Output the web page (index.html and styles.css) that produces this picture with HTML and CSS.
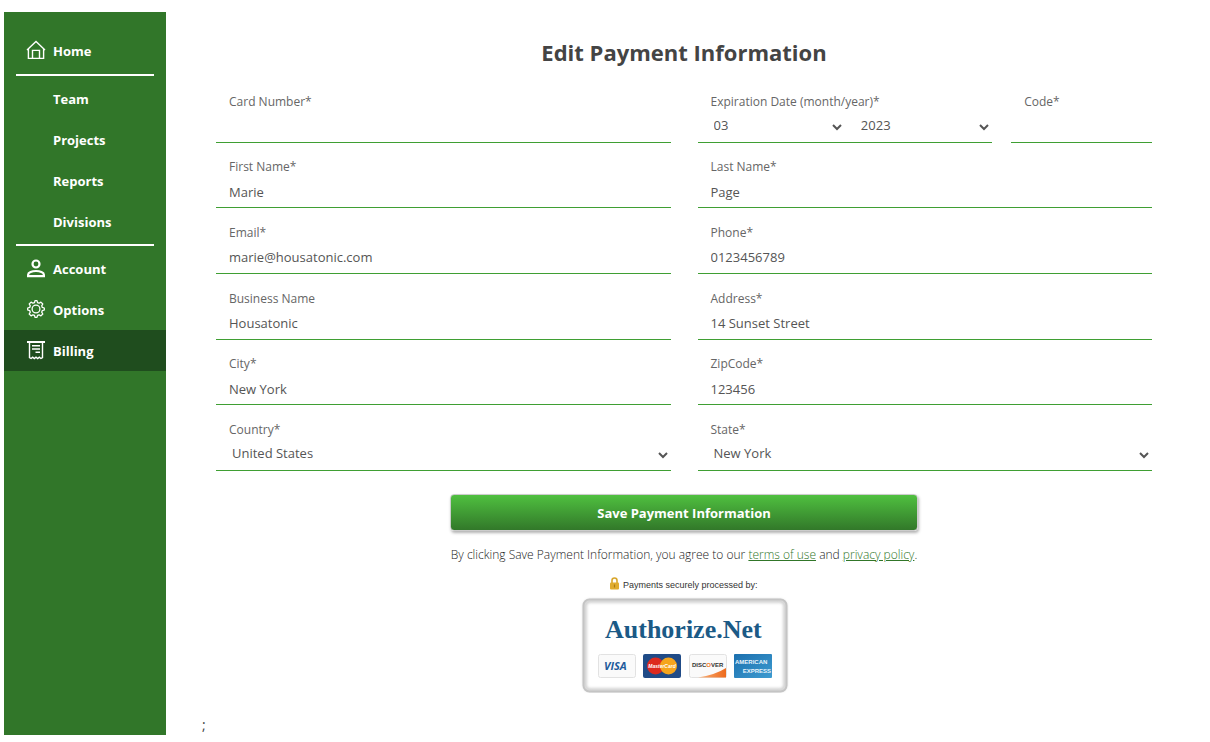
FILE: index.html
```html
<!DOCTYPE html>
<html lang="en">
<head>
<meta charset="utf-8">
<title>Edit Payment Information</title>
<link rel="stylesheet" href="styles.css">
</head>
<body>
<div class="layout">
  <nav class="sidebar">
    <a class="nav-item" href="#">
      <svg class="nav-icon" viewBox="0 0 20 20" fill="none" stroke="#fff" stroke-width="1.4"><path d="M1 10 10 1.400 19 10M2.400 9v9.400h15.200V9M6.500 18.400v-8h7v8"/></svg>
      Home</a>
    <hr class="nav-divider">
    <a class="nav-item" href="#">Team</a>
    <a class="nav-item" href="#">Projects</a>
    <a class="nav-item" href="#">Reports</a>
    <a class="nav-item" href="#">Divisions</a>
    <hr class="nav-divider">
    <a class="nav-item" href="#">
      <svg class="nav-icon" viewBox="0 0 20 20" fill="none" stroke="#fff" stroke-width="2.200"><circle cx="10" cy="6" r="3.500"/><path d="M2.100 18.200v-1.500C2.100 14.400 6 13 10 13s7.900 1.400 7.900 3.700v1.500z"/></svg>
      Account</a>
    <a class="nav-item" href="#">
      <svg class="nav-icon" viewBox="0 0 20 20" fill="none" stroke="#fff" stroke-width="1.3" stroke-linejoin="round"><circle cx="10" cy="10" r="3.900"/><path d="M9 1.600h2l.5 2 1.600.6 1.800-1.100 1.900 1.900-1.100 1.800.6 1.600 2 .6v2l-2 .6-.6 1.600 1.100 1.800-1.900 1.900-1.800-1.100-1.600.6-.5 2H9l-.5-2-1.600-.6-1.800 1.100L3.200 15l1.100-1.800-.6-1.600-2-.6V9l2-.6.6-1.600L3.200 5l1.900-1.900 1.800 1.100 1.600-.6z"/></svg>
      Options</a>
    <a class="nav-item nav-item-active" href="#">
      <svg class="nav-icon" viewBox="0 0 20 20" fill="none" stroke="#fff"><path stroke-width="2" d="M1 2h18"/><path stroke-width="1.400" d="M3.500 2v15.500l1.600 1 1.600-1.300 1.600 1.300L10 17.200l1.700 1.300 1.600-1.300 1.600 1.300 1.600-1V2"/><path stroke-width="1.400" d="M6 5.800h8M6 9h8M9.500 12.200H14"/></svg>
      Billing</a>
  </nav>

  <main class="content">
    <h1 class="title">Edit Payment Information</h1>
    <form class="payment">
      <div class="fields">
        <div class="field">
          <label for="card">Card Number*</label>
          <input id="card" type="text">
        </div>
        <div class="card-extra">
          <div class="field">
            <label for="month">Expiration Date (month/year)*</label>
            <div class="select-pair">
              <select id="month"><option>03</option></select>
              <select id="year" aria-label="Expiration year"><option>2023</option></select>
            </div>
          </div>
          <div class="field">
            <label for="code">Code*</label>
            <input id="code" type="text">
          </div>
        </div>
        <div class="field">
          <label for="first">First Name*</label>
          <input id="first" type="text" value="Marie">
        </div>
        <div class="field">
          <label for="last">Last Name*</label>
          <input id="last" type="text" value="Page">
        </div>
        <div class="field">
          <label for="email">Email*</label>
          <input id="email" type="email" value="marie@housatonic.com">
        </div>
        <div class="field">
          <label for="phone">Phone*</label>
          <input id="phone" type="tel" value="0123456789">
        </div>
        <div class="field">
          <label for="business">Business Name</label>
          <input id="business" type="text" value="Housatonic">
        </div>
        <div class="field">
          <label for="address">Address*</label>
          <input id="address" type="text" value="14 Sunset Street">
        </div>
        <div class="field">
          <label for="city">City*</label>
          <input id="city" type="text" value="New York">
        </div>
        <div class="field">
          <label for="zip">ZipCode*</label>
          <input id="zip" type="text" value="123456">
        </div>
        <div class="field">
          <label for="country">Country*</label>
          <select id="country"><option>United States</option></select>
        </div>
        <div class="field">
          <label for="state">State*</label>
          <select id="state"><option>New York</option></select>
        </div>
      </div>
      <button class="save" type="submit">Save Payment Information</button>
      <p class="terms">By clicking Save Payment Information, you agree to our <a href="#">terms of use</a> and <a href="#">privacy policy</a>.</p>
    </form>
    <svg class="seal" viewBox="0 0 210 120" role="img" aria-label="Payments securely processed by Authorize.Net">
      <defs>
        <linearGradient id="amex" x1="0" y1="0" x2="1" y2="1"><stop offset="0" stop-color="#1b6fae"/><stop offset="1" stop-color="#3d9bd0"/></linearGradient>
        <linearGradient id="orange" x1="0" y1="0" x2="1" y2="0"><stop offset="0" stop-color="#f9b27a"/><stop offset="1" stop-color="#ee6a1c"/></linearGradient>
        <filter id="soft" x="-10%" y="-10%" width="120%" height="120%"><feGaussianBlur stdDeviation="1.500"/></filter>
      </defs>
      <path d="M33 10V7.500a2.500 2.500 0 0 1 5 0V10" fill="none" stroke="#d8a62c" stroke-width="1.600"/>
      <rect x="31" y="9.500" width="9" height="7" rx="1" fill="#e0ac30"/>
      <path d="M35.500 11.500v3" stroke="#a87a18" stroke-width="1.200"/>
      <text class="seal-caption" x="44" y="15">Payments securely processed by:</text>
      <rect x="4.500" y="26.500" width="203" height="92" rx="6" fill="#fff" stroke="#c4c4c4" stroke-width="2"/>
      <rect x="6" y="28" width="200" height="89" rx="5" fill="none" stroke="#c4c4c4" stroke-width="3" filter="url(#soft)"/>
      <text class="seal-brand" x="26" y="65">Authorize.Net</text>
      <g stroke="#e2e2e2"><rect x="19.500" y="81.500" width="37" height="23" rx="2" fill="#fafafa"/><rect x="110.500" y="81.500" width="37" height="23" rx="2" fill="#fafafa"/></g>
      <text class="seal-visa" x="25" y="97">VISA</text>
      <rect x="64" y="81" width="38" height="24" rx="2" fill="#204b87"/>
      <circle cx="76.500" cy="93" r="8.500" fill="#dd2a1f"/><circle cx="89.500" cy="93" r="8.500" fill="#f5a51d"/>
      <text class="seal-master" x="83" y="95">MasterCard</text>
      <path d="M147 95v9.500h-28Q136 102 147 95z" fill="url(#orange)"/>
      <text class="seal-discover" x="113" y="94">DISC<tspan fill="#ee7422">O</tspan>VER</text>
      <rect x="155" y="81" width="38" height="24" rx="1" fill="url(#amex)"/>
      <text class="seal-amex" x="156" y="91">AMERICAN</text>
      <text class="seal-amex" x="192" y="100" text-anchor="end">EXPRESS</text>
    </svg>
    <p class="stray">;</p>
  </main>
</div>
</body>
</html>
```

FILE: styles.css
```css
* { box-sizing: border-box; }

body {
  margin: 0;
  padding: 12px 44px 7px 4px;
  min-height: 100vh;
  display: flex;
  background: #fff;
  color: #444;
  font: 14px/20px "Open Sans", "Noto Sans", sans-serif;
}

.layout { flex: 1; display: flex; gap: 36px; }

.sidebar {
  width: 162px;
  flex: none;
  padding-top: 18px;
  background: #317629;
}

.nav-item {
  position: relative;
  display: flex;
  align-items: center;
  height: 41px;
  padding-left: 49px;
  color: #fff;
  font-size: 13px;
  font-weight: 700;
  text-decoration: none;
}
.nav-item-active { background: #1f4d1e; }
.nav-icon { position: absolute; left: 22px; top: 10px; width: 20px; height: 20px; }
.nav-divider { margin: 2px 12px; border: 0; border-top: 2px solid #fff; }
.nav-item:first-child { margin-bottom: 3px; }

.content { flex: 1; min-width: 0; display: flex; flex-direction: column; }

.title {
  margin: 24px 0 0;
  font-size: 22px;
  line-height: 32px;
  font-weight: 700;
  text-align: center;
}

.payment {
  display: flex;
  flex-direction: column;
  align-items: center;
  padding: 9px 14px 0;
}

.fields {
  align-self: stretch;
  min-height: 394px;
  display: grid;
  grid-template-columns: 1fr 1fr;
  grid-auto-rows: 1fr;
  column-gap: 27px;
}
.card-extra { display: grid; grid-template-columns: 295fr 141fr; column-gap: 19px; }

.field {
  min-width: 0;
  display: flex;
  flex-direction: column;
  justify-content: flex-end;
  border-bottom: 1px solid #3f9f33;
}
.field label { padding-left: 13px; font-size: 12px; color: #666; }
.field input,
.field select {
  width: 100%;
  height: 30px;
  margin: 0;
  border: 0;
  outline: 0;
  background: transparent;
  color: #555;
  font: 13px/20px "Open Sans", "Noto Sans", sans-serif;
}
.field input { padding: 0 13px 1px; }
.field select { padding: 0 5px 4px 12px; }
.select-pair { display: flex; }

.save {
  width: 50%;
  height: 37px;
  margin-top: 23px;
  border: 1px solid #ccc;
  border-radius: 4px;
  background: linear-gradient(#50c240, #317629) border-box;
  box-shadow: 1px 2px 3px rgba(0, 0, 0, 0.3);
  color: #fff;
  font: 700 13px/20px "Open Sans", "Noto Sans", sans-serif;
}

.terms { margin: 14px 0 0; font-size: 12px; font-weight: 300; color: #222; }
.terms a { color: #317629; }

.seal { width: 210px; height: 120px; margin: 8px auto 0; }
.seal-caption { font: 9px "Liberation Sans", sans-serif; fill: #333; }
.seal-brand { font: 700 26px "Liberation Serif", serif; fill: #1b5a86; }
.seal-visa { font: italic 700 11px "Open Sans", sans-serif; fill: #1f5c9c; }
.seal-master { font: italic 700 5px "Liberation Sans", sans-serif; fill: #fff; text-anchor: middle; }
.seal-discover { font: 700 6px "Liberation Sans", sans-serif; fill: #333; }
.seal-amex { font: 700 6px "Liberation Sans", sans-serif; fill: #e8f4fc; }

.stray { margin: 22px 0 0; }
```
